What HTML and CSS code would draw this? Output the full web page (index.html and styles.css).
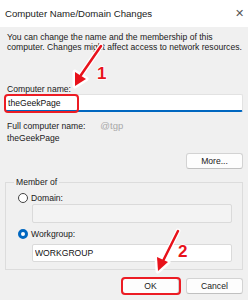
FILE: index.html
```html
<!DOCTYPE html>
<html lang="en">
<head>
    <meta charset="UTF-8">
    <title>Computer Name/Domain Changes</title>
    <link rel="stylesheet" href="styles.css">
</head>
<body>
    <div class="window">
        <div class="titlebar">
            <span class="title">Computer Name/Domain Changes</span>
            <span class="close">&#x2715;</span>
        </div>

        <div class="content">
            <p class="intro">You can change the name and the membership of this computer. Changes might affect access to network resources.</p>

            <label class="label-name" for="compName">Computer name:</label>
            <div class="textbox focused">
                <input id="compName" type="text" value="theGeekPage">
            </div>

            <div class="full-row">
                <span>Full computer name:</span>
                <span class="watermark">@tgp</span>
            </div>
            <div class="full-value">theGeekPage</div>

            <div class="more-row">
                <button type="button" class="btn">More...</button>
            </div>

            <div class="group">
                <div class="group-title"><span>Member of</span></div>
                <div class="radio-row">
                    <span class="radio"></span>
                    <span>Domain:</span>
                </div>
                <div class="textbox disabled"></div>
                <div class="radio-row second">
                    <span class="radio checked"></span>
                    <span>Workgroup:</span>
                </div>
                <div class="textbox plain">
                    <input type="text" value="WORKGROUP">
                </div>
            </div>

            <div class="actions">
                <button type="button" class="btn">OK</button>
                <button type="button" class="btn">Cancel</button>
            </div>
        </div>

        <!-- annotations drawn over the dialog -->
        <div class="mark mark-name"></div>
        <div class="mark mark-ok"></div>
        <svg class="arrows" width="248" height="300" viewBox="0 0 248 300">
            <g stroke="#fff" stroke-width="5" stroke-linecap="round" fill="#fff" stroke-linejoin="round">
                <line x1="101" y1="46" x2="81" y2="75"/>
                <polygon points="75,86 75,72 86,79"/>
                <line x1="178" y1="231" x2="163" y2="261"/>
                <polygon points="158,271 157,257 168,262"/>
            </g>
            <g stroke="#e8121b" stroke-width="2.5" stroke-linecap="round" fill="#e8121b">
                <line x1="101" y1="46" x2="81" y2="75"/>
                <polygon stroke="none" points="75,86 75,72 86,79"/>
                <line x1="178" y1="231" x2="163" y2="261"/>
                <polygon stroke="none" points="158,271 157,257 168,262"/>
            </g>
            <text class="num" x="97" y="79">1</text>
            <text class="num" x="178" y="257">2</text>
        </svg>
    </div>
</body>
</html>
```

FILE: styles.css
```css
body {
    margin: 0;
    padding: 0;
    background: #f0f0f0;
    font-family: "Liberation Sans", Arial, sans-serif;
    color: #1a1a1a;
}
.window {
    position: relative;
    width: 248px;
    height: 300px;
    background: #f0f0f0;
    overflow: hidden;
}
.titlebar {
    height: 27px;
    background: #fff;
    display: flex;
    align-items: center;
    justify-content: space-between;
    padding: 0 4px 0 5px;
}
.title {
    font-size: 9.6px;
    color: #222;
}
.close {
    font-size: 11px;
    color: #555;
}
.content {
    padding: 0 5px;
    font-size: 8.6px;
}
.intro {
    margin: 5px 0 0 2px;
    line-height: 10px;
}
.label-name {
    display: block;
    margin: 32px 0 0 2px;
    line-height: 10px;
}
.textbox {
    box-sizing: border-box;
    height: 18px;
    background: #fff;
    border: 1px solid #e2e2e2;
    border-radius: 2px;
    display: flex;
    align-items: center;
}
.textbox input {
    border: none;
    outline: none;
    background: transparent;
    font: inherit;
    color: #111;
    padding: 0 2px;
    width: 100%;
}
.focused {
    border-bottom: 2px solid #0067c0;
}
.full-row {
    display: flex;
    margin: 8px 0 0 2px;
    line-height: 12px;
}
.watermark {
    margin-left: 15px;
    color: #a8a8a8;
    font-size: 9.5px;
}
.full-value {
    margin-left: 2px;
    line-height: 12px;
}
.more-row {
    display: flex;
    justify-content: flex-end;
    margin-top: 9px;
}
.btn {
    box-sizing: border-box;
    width: 57px;
    height: 16px;
    background: #fdfdfd;
    border: 1px solid #d3d3d3;
    border-bottom-color: #c0c0c0;
    border-radius: 3px;
    font: inherit;
    color: #1a1a1a;
    padding: 0;
}
.group {
    box-sizing: border-box;
    height: 88px;
    margin-top: 13px;
    padding: 0 10px 0 12px;
    border: 1px solid #dcdcdc;
}
.group-title {
    margin: -6px 0 0 -4px;
    line-height: 10px;
}
.group-title span {
    background: #f0f0f0;
    padding: 0 2px;
}
.radio-row {
    display: flex;
    align-items: center;
    gap: 3px;
    height: 12px;
    margin: 5px 0 0 0;
}
.radio-row.second {
    margin-top: 5px;
}
.radio {
    box-sizing: border-box;
    width: 10px;
    height: 10px;
    border: 1px solid #444;
    border-radius: 50%;
    background: #fff;
}
.radio.checked {
    border: 3px solid #0067c0;
}
.group .textbox {
    margin: 0 0 0 14px;
    height: 19px;
    border-color: #dadada;
}
.disabled {
    background: #f3f3f3;
}
.group .plain {
    margin-top: 4px;
    height: 18px;
}
.actions {
    display: flex;
    justify-content: flex-end;
    gap: 7px;
    margin-top: 8px;
}
.mark {
    position: absolute;
    border: 2px solid #ec1c24;
    border-radius: 4px;
    box-sizing: border-box;
}
.mark-name {
    left: 4px;
    top: 94px;
    width: 75px;
    height: 19px;
}
.mark-ok {
    left: 121px;
    top: 277px;
    width: 60px;
    height: 18px;
}
.arrows {
    position: absolute;
    left: 0;
    top: 0;
    pointer-events: none;
}
.num {
    font-family: "Liberation Sans", Arial, sans-serif;
    font-weight: bold;
    font-size: 17px;
    fill: #e8121b;
    stroke: #fff;
    stroke-width: 1.5px;
    paint-order: stroke;
}
```
